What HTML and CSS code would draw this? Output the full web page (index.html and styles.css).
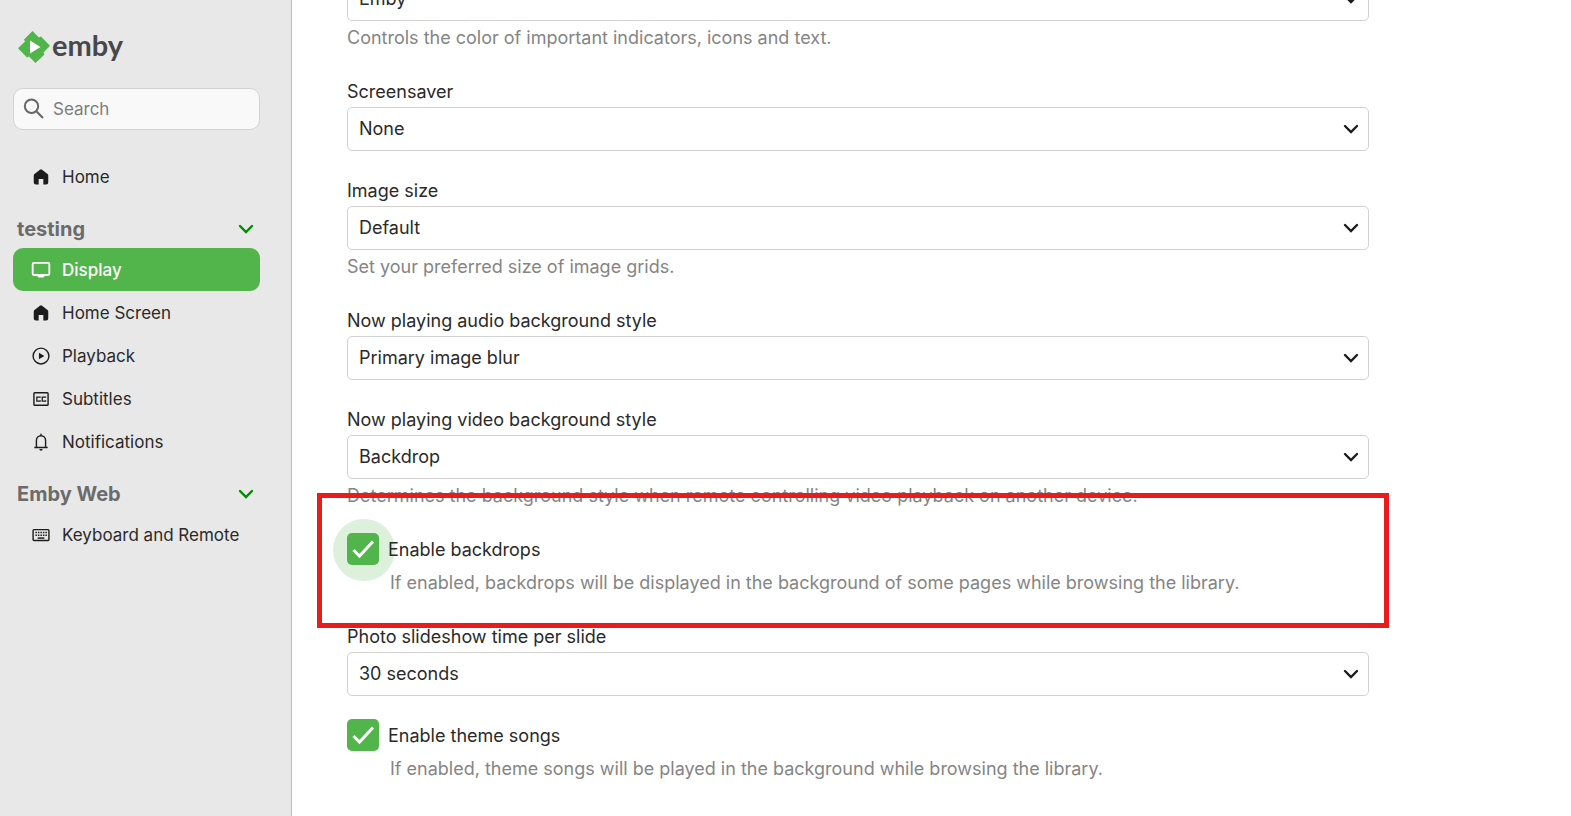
FILE: index.html
```html
<!DOCTYPE html>
<html lang="en">
<head>
<meta charset="utf-8">
<title>Display - Emby</title>
<meta name="viewport" content="width=device-width, initial-scale=1">
<link rel="stylesheet" href="styles.css">
</head>
<body>
<svg class="defs" aria-hidden="true">
  <symbol id="home" viewBox="0 0 24 24"><path d="M10.700 3.200a2 2 0 0 1 2.600 0l6.500 5.200a2.500 2.500 0 0 1 .9 2V18.500A2.500 2.500 0 0 1 18.200 21H14.800v-6.500H9.200V21H5.800a2.500 2.500 0 0 1-2.500-2.500V10.400a2.500 2.500 0 0 1 .9-2z" fill="currentColor"/></symbol>
  <symbol id="chevron" viewBox="0 0 16 16"><path d="M2 5l6 6 6-6" fill="none" stroke="currentColor" stroke-width="2.400" stroke-linecap="round"/></symbol>
</svg>
<div class="app">
  <aside class="sidebar">
    <a class="logo" href="#" aria-label="Emby home">
      <svg class="logo-mark" viewBox="0 0 32 32" aria-hidden="true"><path d="M14.500 0L21 6.500 23 5.500 32 14.800 25.500 21.500 26.500 23.500 17.500 32 11 25.500 9 26.500 0 17.200 7 10.500 6 8.500z" fill="#52b54b"/><path d="M12 9.500v13L22.500 16z" fill="#fff"/></svg>
      <span>emby</span>
    </a>
    <label class="search">
      <svg viewBox="0 0 24 24" aria-hidden="true"><path d="M9.500 2.500a6.700 6.700 0 1 0 0 13.400 6.700 6.700 0 0 0 0-13.400zM14.300 14.300l6.700 6.700" fill="none" stroke="currentColor" stroke-width="2"/></svg>
      <input type="search" placeholder="Search" aria-label="Search">
    </label>
    <nav>
      <a class="item" href="#"><svg aria-hidden="true"><use href="#home"/></svg>Home</a>
      <button class="section" type="button">testing<svg aria-hidden="true"><use href="#chevron"/></svg></button>
      <a class="item active" href="#" aria-current="page"><svg viewBox="0 0 24 24" aria-hidden="true"><path d="M3.500 3.500h17A1.500 1.500 0 0 1 22 5v11.500a1.500 1.500 0 0 1-1.500 1.500h-17A1.500 1.500 0 0 1 2 16.500V5a1.500 1.500 0 0 1 1.500-1.500z" fill="none" stroke="currentColor" stroke-width="2.200"/><path d="M8 18h8v1.500a1.500 1.500 0 0 1-1.500 1.500h-5A1.500 1.500 0 0 1 8 19.500z" fill="currentColor"/></svg>Display</a>
      <a class="item" href="#"><svg aria-hidden="true"><use href="#home"/></svg>Home Screen</a>
      <a class="item" href="#"><svg viewBox="0 0 24 24" aria-hidden="true"><circle cx="12" cy="12" r="9.500" fill="none" stroke="currentColor" stroke-width="1.700"/><path d="M9.500 8v8l6.500-4z" fill="currentColor"/></svg>Playback</a>
      <a class="item" href="#"><svg viewBox="0 0 24 24" aria-hidden="true"><rect x="3.500" y="4.500" width="17" height="15" rx="1" fill="none" stroke="currentColor" stroke-width="1.700"/><path d="M11 10.500V9.600H7v4.800h4v-.9M17.500 10.500V9.600h-4v4.800h4v-.9" fill="none" stroke="currentColor" stroke-width="1.500"/></svg>Subtitles</a>
      <a class="item" href="#"><svg viewBox="0 0 24 24" aria-hidden="true"><path d="M4 18.500h16M6.500 18.500V10a5.500 5.500 0 0 1 11 0v8.500M12 4.500V2" fill="none" stroke="currentColor" stroke-width="1.700"/><path d="M10 20.500h4a2 2 0 0 1-4 0z" fill="currentColor"/></svg>Notifications</a>
      <button class="section" type="button">Emby Web<svg aria-hidden="true"><use href="#chevron"/></svg></button>
      <a class="item" href="#"><svg viewBox="0 0 24 24" aria-hidden="true"><rect x="2.500" y="5.500" width="19" height="13" rx="1" fill="none" stroke="currentColor" stroke-width="1.700"/><path d="M5.300 9h14M5.300 12.300h14" stroke="currentColor" stroke-width="1.800" stroke-dasharray="1.800 1.200"/><path d="M8 15.700h8" stroke="currentColor" stroke-width="1.800"/></svg>Keyboard and Remote</a>
    </nav>
  </aside>
  <main>
    <form class="settings">
      <div class="field">
        <div class="select"><select aria-label="Accent color"><option>Emby</option></select><svg aria-hidden="true"><use href="#chevron"/></svg></div>
        <p class="help">Controls the color of important indicators, icons and text.</p>
      </div>
      <div class="field">
        <label for="saver">Screensaver</label>
        <div class="select"><select id="saver"><option>None</option></select><svg aria-hidden="true"><use href="#chevron"/></svg></div>
      </div>
      <div class="field">
        <label for="size">Image size</label>
        <div class="select"><select id="size"><option>Default</option></select><svg aria-hidden="true"><use href="#chevron"/></svg></div>
        <p class="help">Set your preferred size of image grids.</p>
      </div>
      <div class="field">
        <label for="audio">Now playing audio background style</label>
        <div class="select"><select id="audio"><option>Primary image blur</option></select><svg aria-hidden="true"><use href="#chevron"/></svg></div>
      </div>
      <div class="field before-check">
        <label for="video">Now playing video background style</label>
        <div class="select"><select id="video"><option>Backdrop</option></select><svg aria-hidden="true"><use href="#chevron"/></svg></div>
        <p class="help">Determines the background style when remote controlling video playback on another device.</p>
      </div>
      <div class="field check highlighted">
        <label class="check-row"><input type="checkbox" checked><svg viewBox="0 0 32 32" aria-hidden="true"><path d="M6.500 17l6 6L26 8.500" fill="none" stroke="#fff" stroke-width="3"/></svg><span>Enable backdrops</span></label>
        <p class="help">If enabled, backdrops will be displayed in the background of some pages while browsing the library.</p>
      </div>
      <div class="field before-check">
        <label for="slide">Photo slideshow time per slide</label>
        <div class="select"><select id="slide"><option>30 seconds</option></select><svg aria-hidden="true"><use href="#chevron"/></svg></div>
      </div>
      <div class="field check">
        <label class="check-row"><input type="checkbox" checked><svg viewBox="0 0 32 32" aria-hidden="true"><path d="M6.500 17l6 6L26 8.500" fill="none" stroke="#fff" stroke-width="3"/></svg><span>Enable theme songs</span></label>
        <p class="help">If enabled, theme songs will be played in the background while browsing the library.</p>
      </div>
      <div class="field">
        <label for="volume">Theme song volume</label>
        <div class="select"><select id="volume"><option>Default</option></select><svg aria-hidden="true"><use href="#chevron"/></svg></div>
      </div>
    </form>
  </main>
</div>
</body>
</html>
```
FILE: styles.css
```css
* { box-sizing: border-box; }
body { margin: 0; font: 400 18px/22px Inter, "Liberation Sans", sans-serif; color: #2a2a2a; background: #fff; }
input, select, button { font: inherit; color: inherit; }
.defs { position: absolute; width: 0; height: 0; }
.app { display: flex; height: 100vh; overflow: hidden; }
.sidebar { flex: 0 0 292px; min-width: 0; padding: 30px 31px 0 13px; background: #e8e8e8; border-right: 1px solid #bdbdbd; }
.logo { display: flex; align-items: center; gap: 2px; height: 34px; padding-left: 5px; color: #484848; text-decoration: none; font: 700 29px/32px Lato, sans-serif; }
.logo span { padding-bottom: 4px; }
.logo-mark { width: 32px; height: 32px; }
.search { display: flex; align-items: center; gap: 7px; height: 42px; margin: 24px 0 25px; padding: 0 8px; background: #f9f9f9; border: 1px solid #d2d2d2; border-radius: 10px; color: #666; font-size: 17px; }
.search svg { flex: none; width: 24px; height: 24px; }
.search input { width: 100%; min-width: 0; flex: 1; padding: 0; border: 0; background: none; outline: 0; }
.search input::placeholder { color: #7d7d7d; opacity: 1; }
.item { display: flex; align-items: center; gap: 11px; height: 43px; padding-left: 18px; border-radius: 10px; color: #2a2a2a; text-decoration: none; white-space: nowrap; font-size: 17px; }
.item svg { flex: none; width: 20px; height: 20px; color: #1c1c1c; }
.item.active { background: #52b54b; color: #fff; font-weight: 500; }
.item.active svg { color: #fff; }
.section { display: flex; justify-content: space-between; align-items: center; width: 100%; height: 38px; margin-top: 12px; padding: 0 6px 0 4px; border: 0; background: none; color: #6b6b6b; font-size: 20px; font-weight: 700; }
.section svg { width: 16px; height: 16px; color: #008a00; }
main { flex: 1; min-width: 0; overflow: hidden; }
.settings { display: flex; flex-direction: column; margin: -23px 202px 0 55px; }
.field { display: flex; flex-direction: column; margin-bottom: 29px; }
.field:last-child { margin-top: 1px; }
.field > label:not(.check-row) { margin-bottom: 4px; }
.before-check { margin-bottom: 23px; }
.select { display: grid; align-items: center; }
.select > * { grid-area: 1 / 1; }
.select select { appearance: none; width: 100%; height: 44px; padding: 0 40px 0 11px; border: 1px solid #d2d2d2; border-radius: 5px; background: #fff; }
.select svg { justify-self: end; width: 16px; height: 16px; margin-right: 10px; pointer-events: none; color: #1c1c1c; }
.help { margin: 5px 0 2px; line-height: 24px; color: #858585; }
.check .help { margin-top: 6px; padding-left: 43px; }
.check-row { display: grid; grid-template-columns: 32px 1fr; column-gap: 9px; align-items: center; }
.check-row span { padding-top: 2px; }
.check-row input { appearance: none; grid-area: 1 / 1; width: 32px; height: 32px; margin: 0; border-radius: 5px; background: #52b54b; }
.check-row svg { grid-area: 1 / 1; width: 32px; height: 32px; z-index: 1; pointer-events: none; }
.highlighted { position: relative; }
.highlighted::before { content: ""; position: absolute; left: -14px; top: -14px; width: 62px; height: 62px; border-radius: 50%; background: #dcf0db; z-index: -1; }
.highlighted::after { content: ""; position: absolute; inset: -40px -20px -31px -30px; border: 5px solid #e81c1c; pointer-events: none; }
```
